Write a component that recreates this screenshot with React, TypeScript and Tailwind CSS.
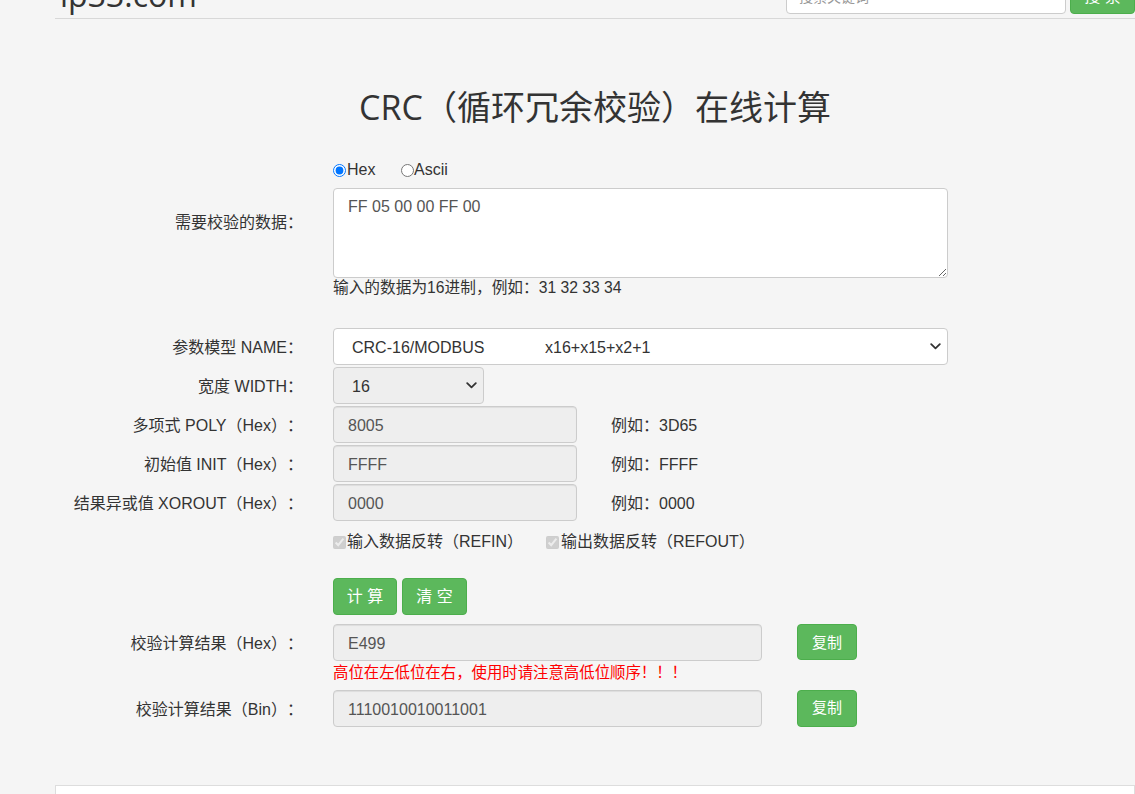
import React from "react";

const SANS = { fontFamily: '"Liberation Sans", "Noto Sans CJK SC", sans-serif' };
const TITLE = { fontFamily: '"Open Sans", "Noto Sans CJK SC", sans-serif' };

function Chevron() {
  return (
    <svg width="11" height="7" viewBox="0 0 11 7" className="shrink-0">
      <polyline points="1.2,1.2 5.5,5.4 9.8,1.2" fill="none" stroke="#333" strokeWidth="1.8" strokeLinecap="round" strokeLinejoin="round" />
    </svg>
  );
}

function Label({ children }: { children: React.ReactNode }) {
  return (
    <div className="w-[248px] shrink-0 text-right text-[16px] leading-[20px] text-[#333] self-center pt-[2px]">
      {children}
    </div>
  );
}

function ReadInput({ value, w }: { value: string; w: string }) {
  return (
    <div
      className={`${w} h-[37px] flex items-center border border-[#ccc] rounded-[4px] bg-[#eeeeee] pl-[14px] pt-[2px] text-[16px] text-[#555] shadow-[inset_0_1px_1px_rgba(0,0,0,0.075)]`}
    >
      {value}
    </div>
  );
}

function CopyBtn() {
  return (
    <button className="ml-[35px] w-[60px] h-[36px] bg-[#5cb85c] border border-[#4cae4c] rounded-[4px] text-white text-[15px] leading-none flex items-center justify-center self-start">
      复制
    </button>
  );
}

export default function App() {
  return (
    <div className="min-h-screen w-full overflow-hidden bg-[#f5f5f5] text-[#333] [text-spacing-trim:space-all]" style={SANS}>
      <div className="ml-[55px] w-[1080px]">
        {/* Header */}
        <div className="-mt-[31px] h-[50px] border-b border-[#d8d8d8] flex justify-between">
          <div className="mt-[10px] pl-[5px] text-[32px] leading-[32px] text-[#333]" style={TITLE}>
            ip33.com
          </div>
          <div className="self-end mb-[4px] flex gap-[4px]">
            <div className="w-[280px] h-[34px] bg-white border border-[#ccc] rounded-[4px] pl-[12px] flex items-center text-[14px] text-[#999]">
              搜索关键词
            </div>
            <div className="w-[65px] h-[34px] bg-[#5cb85c] border border-[#4cae4c] rounded-[4px] flex items-center justify-center text-white text-[16px]">
              搜 索
            </div>
          </div>
        </div>

        {/* Title */}
        <h1 className="mt-[68px] h-[40px] leading-[40px] text-center text-[34px] text-[#333] font-normal" style={TITLE}>
          CRC（循环冗余校验）在线计算
        </h1>

        {/* Form */}
        <div className="mt-[33px] flex flex-col">
          {/* Data */}
          <div className="flex">
            <div className="w-[248px] shrink-0 text-right text-[16px] leading-[20px] pt-[53px]">需要校验的数据：</div>
            <div className="ml-[30px] flex flex-col">
              <div className="h-[20px] flex items-center text-[16px]">
                <label className="w-[68px] flex items-center">
                  <input type="radio" name="fmt" defaultChecked className="m-0 w-[13px] h-[13px]" />
                  <span className="ml-[1px]">Hex</span>
                </label>
                <label className="flex items-center">
                  <input type="radio" name="fmt" className="m-0 w-[13px] h-[13px]" />
                  <span>Ascii</span>
                </label>
              </div>
              <textarea
                readOnly
                defaultValue="FF 05 00 00 FF 00"
                className="mt-[8px] w-[615px] h-[90px] bg-white border border-[#ccc] rounded-[4px] pl-[14px] pt-[8px] text-[16px] leading-[20px] text-[#555] outline-none"
                style={SANS}
              />
              <div className="h-[20px] leading-[20px] text-[15.7px] text-[#333]">输入的数据为16进制，例如：31 32 33 34</div>
            </div>
          </div>

          {/* NAME */}
          <div className="mt-[30px] flex h-[37px]">
            <Label>参数模型 NAME：</Label>
            <div className="ml-[30px] w-[615px] h-[37px] bg-white border border-[#ccc] rounded-[4px] flex items-center pl-[18px] pr-[6px] text-[16px] text-[#333]">
              <span className="w-[193px] inline-block pt-[2px]">CRC-16/MODBUS</span>
              <span className="flex-1 pt-[2px]">x16+x15+x2+1</span>
              <Chevron />
            </div>
          </div>

          {/* WIDTH */}
          <div className="mt-[2px] flex h-[37px]">
            <Label>宽度 WIDTH：</Label>
            <div className="ml-[30px] w-[151px] h-[37px] bg-[#eeeeee] border border-[#ccc] rounded-[4px] flex items-center pl-[18px] pr-[6px] text-[16px] text-[#333]">
              <span className="flex-1 pt-[2px]">16</span>
              <Chevron />
            </div>
          </div>

          {/* POLY */}
          <div className="mt-[2px] flex h-[37px]">
            <Label>多项式 POLY（Hex）：</Label>
            <div className="ml-[30px] flex items-center">
              <ReadInput value="8005" w="w-[244px]" />
              <span className="ml-[34px] text-[16px] pt-[2px]">例如：3D65</span>
            </div>
          </div>

          {/* INIT */}
          <div className="mt-[2px] flex h-[37px]">
            <Label>初始值 INIT（Hex）：</Label>
            <div className="ml-[30px] flex items-center">
              <ReadInput value="FFFF" w="w-[244px]" />
              <span className="ml-[34px] text-[16px] pt-[2px]">例如：FFFF</span>
            </div>
          </div>

          {/* XOROUT */}
          <div className="mt-[2px] flex h-[37px]">
            <Label>结果异或值 XOROUT（Hex）：</Label>
            <div className="ml-[30px] flex items-center">
              <ReadInput value="0000" w="w-[244px]" />
              <span className="ml-[34px] text-[16px] pt-[2px]">例如：0000</span>
            </div>
          </div>

          {/* Checkboxes */}
          <div className="mt-[11px] h-[20px] flex items-center ml-[278px] text-[16px]">
            <label className="w-[213px] flex items-center">
              <input type="checkbox" defaultChecked disabled className="m-0 w-[13px] h-[13px]" />
              <span className="ml-[1px]">输入数据反转（REFIN）</span>
            </label>
            <label className="flex items-center">
              <input type="checkbox" defaultChecked disabled className="m-0 w-[13px] h-[13px]" />
              <span className="ml-[2px]">输出数据反转（REFOUT）</span>
            </label>
          </div>

          {/* Buttons */}
          <div className="mt-[26px] h-[37px] flex ml-[278px] gap-[5px]">
            <button className="w-[64px] h-[37px] bg-[#5cb85c] border border-[#4cae4c] rounded-[4px] text-white text-[16px]">计 算</button>
            <button className="w-[65px] h-[37px] bg-[#5cb85c] border border-[#4cae4c] rounded-[4px] text-white text-[16px]">清 空</button>
          </div>

          {/* Hex result */}
          <div className="mt-[9px] flex h-[37px]">
            <Label>校验计算结果（Hex）：</Label>
            <div className="ml-[30px] flex">
              <ReadInput value="E499" w="w-[429px]" />
              <CopyBtn />
            </div>
          </div>
          <div className="mt-[2px] ml-[278px] h-[20px] leading-[20px] text-[15.4px] text-[#ff0000]">
            高位在左低位在右，使用时请注意高低位顺序！！！
          </div>

          {/* Bin result */}
          <div className="mt-[7px] flex h-[37px]">
            <Label>校验计算结果（Bin）：</Label>
            <div className="ml-[30px] flex">
              <ReadInput value="1110010010011001" w="w-[429px]" />
              <div className="ml-[35px] w-[60px] h-[37px] bg-[#5cb85c] border border-[#4cae4c] rounded-[4px] text-white text-[15px] flex items-center justify-center">
                复制
              </div>
            </div>
          </div>
        </div>

        {/* Footer */}
        <div className="mt-[58px] h-[120px] bg-white border border-[#ddd]" />
      </div>
    </div>
  );
}
